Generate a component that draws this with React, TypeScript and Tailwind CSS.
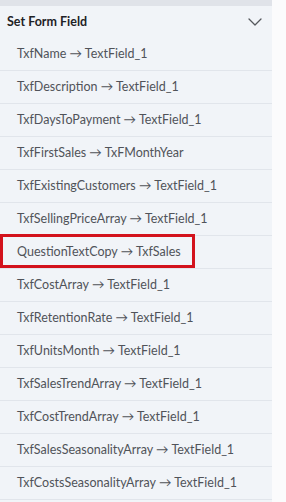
import React from 'react';
import { ChevronDown } from 'lucide-react';

const fields: [string, string][] = [
  ['TxfName', 'TextField_1'],
  ['TxfDescription', 'TextField_1'],
  ['TxfDaysToPayment', 'TextField_1'],
  ['TxfFirstSales', 'TxFMonthYear'],
  ['TxfExistingCustomers', 'TextField_1'],
  ['TxfSellingPriceArray', 'TextField_1'],
  ['QuestionTextCopy', 'TxfSales'],
  ['TxfCostArray', 'TextField_1'],
  ['TxfRetentionRate', 'TextField_1'],
  ['TxfUnitsMonth', 'TextField_1'],
  ['TxfSalesTrendArray', 'TextField_1'],
  ['TxfCostTrendArray', 'TextField_1'],
  ['TxfSalesSeasonalityArray', 'TextField_1'],
  ['TxfCostsSeasonalityArray', 'TextField_1'],
];

const App: React.FC = () => {
  return (
    <div className="flex w-[286px] h-[502px] overflow-hidden bg-[#fbfbfc]" style={{ fontFamily: 'Lato, "Open Sans", sans-serif' }}>
      <div className="w-[272px] flex flex-col bg-[#f1f4f8]">
        <div className="h-[6px] bg-[#e0e3e9]" />
        <div className="h-[32px] flex items-center justify-between pl-[7px] pr-[5px]">
          <span className="text-[12.5px] font-bold text-[#1f2226]">Set Form Field</span>
          <ChevronDown size={24} strokeWidth={1.3} className="text-[#55585d]" />
        </div>
        {fields.map(([from, to], i) => (
          <div key={from} className="relative h-[33px] shrink-0 flex items-center pl-[17px] border-b border-[#e1e5eb]">
            <span className="text-[12.5px] text-[#505359]">
              {from} → {to}
            </span>
            {i === 6 && (
              <div className="absolute left-0 -top-[2px] w-[195px] h-[34px] border-[3px] border-[#d3121c]" />
            )}
          </div>
        ))}
      </div>
    </div>
  );
};

export default App;
